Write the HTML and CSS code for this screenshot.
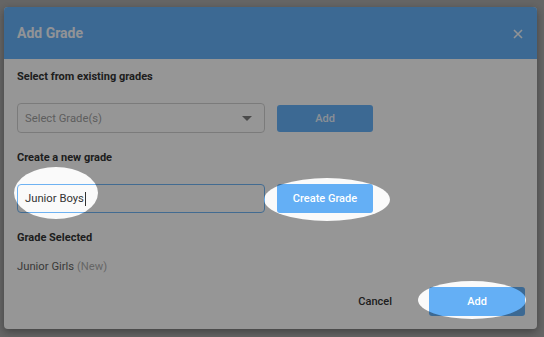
FILE: index.html
```html
<!DOCTYPE html>
<html>
<head>
    <title>Add Grade</title>
    <link rel="stylesheet" href="styles.css">
</head>
<body>
    <div class="page">
        <div class="modal">
            <div class="modal-header">
                <div class="modal-title">Add Grade</div>
                <div class="close-btn">
                    <svg width="10" height="10" viewBox="0 0 10 10">
                        <path d="M1 1 L9 9 M9 1 L1 9" stroke="currentColor" stroke-width="1.6" fill="none"/>
                    </svg>
                </div>
            </div>

            <div class="modal-body">
                <div class="section-label">Select from existing grades</div>
                <div class="field-row first-row">
                    <div class="select-box">
                        <span class="placeholder">Select Grade(s)</span>
                        <span class="arrow"></span>
                    </div>
                    <button class="blue-btn small-btn">Add</button>
                </div>

                <div class="section-label">Create a new grade</div>
                <div class="field-row">
                    <div class="text-input">Junior Boys<span class="caret"></span></div>
                    <button class="blue-btn bright-text">Create Grade</button>
                </div>

                <div class="section-label">Grade Selected</div>
                <div class="selected-item">Junior Girls <span class="new-tag">(New)</span></div>
            </div>

            <div class="modal-footer">
                <button class="cancel-btn">Cancel</button>
                <button class="blue-btn footer-btn bright-text">Add</button>
            </div>
        </div>
    </div>

    <!-- tour overlay -->
    <div class="tour-overlay"></div>
    <div class="spotlight spot-input"></div>
    <div class="spotlight spot-create"></div>
    <div class="spotlight spot-add"></div>
</body>
</html>
```

FILE: styles.css
```css
body {
    margin: 0;
    font-family: Roboto, "Liberation Sans", sans-serif;
    background-color: #a9a9a9;
    width: 544px;
    height: 337px;
    overflow: hidden;
}

.page {
    padding: 7px 0 0 4px;
}

.modal {
    width: 533px;
    height: 322px;
    background-color: #fbfbfb;
    border-radius: 4px;
    box-shadow: 0 3px 9px rgba(0, 0, 0, 0.35);
    overflow: hidden;
    display: flex;
    flex-direction: column;
}

.modal-header {
    height: 52px;
    background-color: #64aff5;
    display: flex;
    align-items: center;
    justify-content: space-between;
    padding: 0 14px 0 13px;
}

.modal-title {
    color: #f2f6fb;
    font-size: 14px;
    font-weight: bold;
}

.close-btn {
    color: #f0f4f8;
    display: flex;
    margin-top: 2px;
}

.modal-body {
    padding: 10px 13px 0 13px;
}

.section-label {
    font-size: 11px;
    font-weight: bold;
    line-height: 16px;
    color: #333;
}

.field-row {
    display: flex;
    align-items: center;
    gap: 12px;
    margin: 18px 0 17px 0;
}

.select-box {
    width: 248px;
    height: 30px;
    box-sizing: border-box;
    border: 1px solid #cdcdcd;
    border-radius: 4px;
    display: flex;
    align-items: center;
    justify-content: space-between;
    padding: 0 12px 0 7px;
}

.placeholder {
    font-size: 11.25px;
    color: #9d9d9d;
}

.arrow {
    width: 0;
    height: 0;
    border-left: 5px solid transparent;
    border-right: 5px solid transparent;
    border-top: 5px solid #7c7c7c;
}

button {
    font-family: Roboto, "Liberation Sans", sans-serif;
    border: none;
    cursor: pointer;
}

.blue-btn {
    width: 96px;
    height: 29px;
    background-color: #64aff5;
    color: #e4eef9;
    font-size: 11px;
    font-weight: 500;
    border-radius: 3px;
}

.small-btn {
    height: 27px;
}

.bright-text {
    color: #fff;
}

.text-input {
    width: 248px;
    height: 29px;
    box-sizing: border-box;
    border: 1px solid #6fb2f2;
    border-radius: 4px;
    padding-left: 7px;
    font-size: 11.25px;
    color: #333;
    display: flex;
    align-items: center;
}

.caret {
    display: inline-block;
    width: 1px;
    height: 14px;
    background-color: #333;
    margin-left: 1px;
}

.selected-item {
    font-size: 11.25px;
    line-height: 16px;
    color: #616161;
    margin-top: 13px;
}

.new-tag {
    color: #aaa;
}

.modal-footer {
    display: flex;
    justify-content: flex-end;
    align-items: center;
    gap: 37px;
    padding: 12px 12px 13px 0;
}

.cancel-btn {
    background: none;
    font-size: 11px;
    font-weight: 500;
    color: #333;
    padding: 0;
}

.footer-btn {
    height: 29px;
}

.tour-overlay {
    position: fixed;
    top: 0;
    left: 0;
    right: 0;
    bottom: 0;
    background-color: rgba(0, 0, 0, 0.4);
}

.spotlight {
    position: absolute;
    border-radius: 50%;
    backdrop-filter: brightness(1.667);
}

.spot-input {
    left: 14px;
    top: 167px;
    width: 84px;
    height: 52px;
}

.spot-create {
    left: 264px;
    top: 178px;
    width: 126px;
    height: 43px;
}

.spot-add {
    left: 418px;
    top: 281px;
    width: 108px;
    height: 38px;
}
```
